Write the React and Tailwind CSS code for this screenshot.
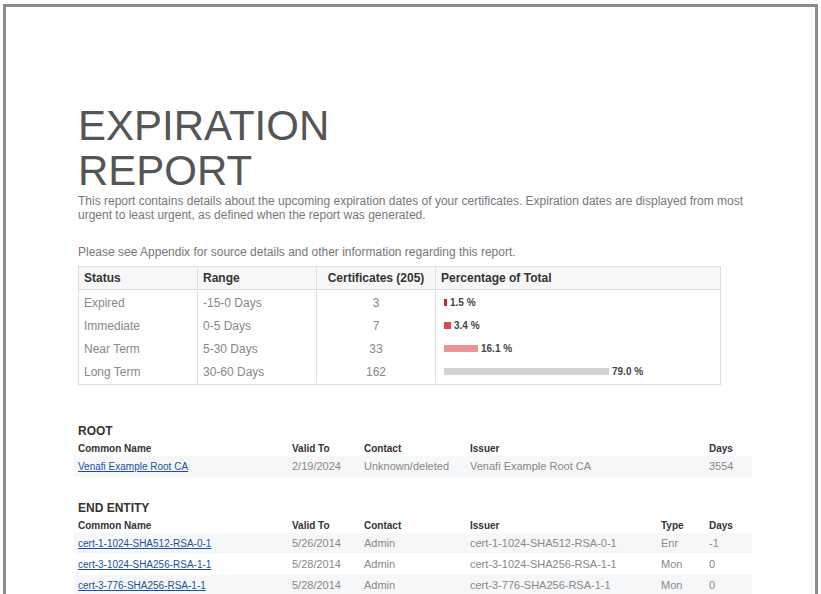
export default function App() {
  const f = { fontFamily: '"Liberation Sans", Arial, sans-serif' };
  const summary = [
    ["Expired", "-15-0 Days", "3", "1.5 %", 3, "#d7262d"],
    ["Immediate", "0-5 Days", "7", "3.4 %", 7, "#e04a4c"],
    ["Near Term", "5-30 Days", "33", "16.1 %", 34, "#e99394"],
    ["Long Term", "30-60 Days", "162", "79.0 %", 165, "#d3d3d3"],
  ];
  const ee = [
    ["cert-1-1024-SHA512-RSA-0-1", "5/26/2014", "Admin", "cert-1-1024-SHA512-RSA-0-1", "Enr", "-1"],
    ["cert-3-1024-SHA256-RSA-1-1", "5/28/2014", "Admin", "cert-3-1024-SHA256-RSA-1-1", "Mon", "0"],
    ["cert-3-776-SHA256-RSA-1-1", "5/28/2014", "Admin", "cert-3-776-SHA256-RSA-1-1", "Mon", "0"],
  ];
  const cols = "grid grid-cols-[214px_72px_106px_191px_48px_1fr]";
  return (
    <div className="w-[821px] h-[594px] overflow-hidden bg-white" style={f}>
      <div className="ml-[3px] mt-[4px] w-[815px] h-[600px] border-[3px] border-b-0 border-[#8c8c8c] pl-[72px] pt-[96px]">
        <h1 className="text-[42px] leading-[45px] text-[#555] font-normal">EXPIRATION<br />REPORT</h1>
        <p className="mt-[2px] w-[670px] text-[12px] leading-[13.5px] text-[#777]">This report contains details about the upcoming expiration dates of your certificates. Expiration dates are displayed from most urgent to least urgent, as defined when the report was generated.</p>
        <p className="mt-[23px] text-[12px] leading-[14px] text-[#777]">Please see Appendix for source details and other information regarding this report.</p>
        <div className="mt-[7px] w-[643px] border border-[#ddd] text-[12px]">
          <div className="grid grid-cols-[119px_119px_119px_1fr] h-[23px] bg-[#f7f7f7] border-b border-[#ddd] font-bold text-[#333] items-center">
            <div className="pl-[5px] border-r border-[#ddd] h-full flex items-center">Status</div>
            <div className="pl-[5px] border-r border-[#ddd] h-full flex items-center">Range</div>
            <div className="text-center border-r border-[#ddd] h-full flex items-center justify-center">Certificates (205)</div>
            <div className="pl-[5px] flex items-center">Percentage of Total</div>
          </div>
          <div className="grid grid-cols-[119px_119px_119px_1fr] py-[1px] text-[#888]">
            {summary.map(([s, r, c, p, w, col]) => (
              <div key={s} className="contents">
                <div className="pl-[5px] border-r border-[#ddd] h-[23px] flex items-center">{s}</div>
                <div className="pl-[5px] border-r border-[#ddd] h-[23px] flex items-center">{r}</div>
                <div className="border-r border-[#ddd] h-[23px] flex items-center justify-center">{c}</div>
                <div className="pl-[8px] h-[23px] flex items-center text-[10px] font-bold text-[#444]">
                  <div className="h-[7px] mr-[3px]" style={{ width: w, background: col }} />{p}
                </div>
              </div>
            ))}
          </div>
        </div>
        <div className="mt-[39px] text-[12px] font-bold text-[#333] leading-[14px]">ROOT</div>
        <div className={`${cols} mt-[3px] text-[10px] font-bold text-[#333] h-[12px] items-center`}>
          <div>Common Name</div><div>Valid To</div><div>Contact</div><div>Issuer</div><div></div><div>Days</div>
        </div>
        <div className={`${cols} -ml-[4px] pl-[4px] w-[678px] mt-[3px] h-[21px] items-center bg-[#f6f7f8] text-[11px] text-[#888]`}>
          <div className="text-[10px] text-[#1a4fa0] underline">Venafi Example Root CA</div><div>2/19/2024</div><div>Unknown/deleted</div><div>Venafi Example Root CA</div><div></div><div>3554</div>
        </div>
        <div className="mt-[24px] text-[12px] font-bold text-[#333] leading-[14px]">END ENTITY</div>
        <div className={`${cols} mt-[3px] text-[10px] font-bold text-[#333] h-[12px] items-center`}>
          <div>Common Name</div><div>Valid To</div><div>Contact</div><div>Issuer</div><div>Type</div><div>Days</div>
        </div>
        <div className="mt-[3px]">
          {ee.map((r, i) => (
            <div key={i} className={`${cols} -ml-[4px] pl-[4px] w-[678px] h-[21px] items-center text-[11px] text-[#888] ${i % 2 === 0 ? "bg-[#f6f7f8]" : "bg-white"}`}>
              <div className="text-[10px] text-[#1a4fa0] underline">{r[0]}</div><div>{r[1]}</div><div>{r[2]}</div><div>{r[3]}</div><div>{r[4]}</div><div>{r[5]}</div>
            </div>
          ))}
        </div>
      </div>
    </div>
  );
}
